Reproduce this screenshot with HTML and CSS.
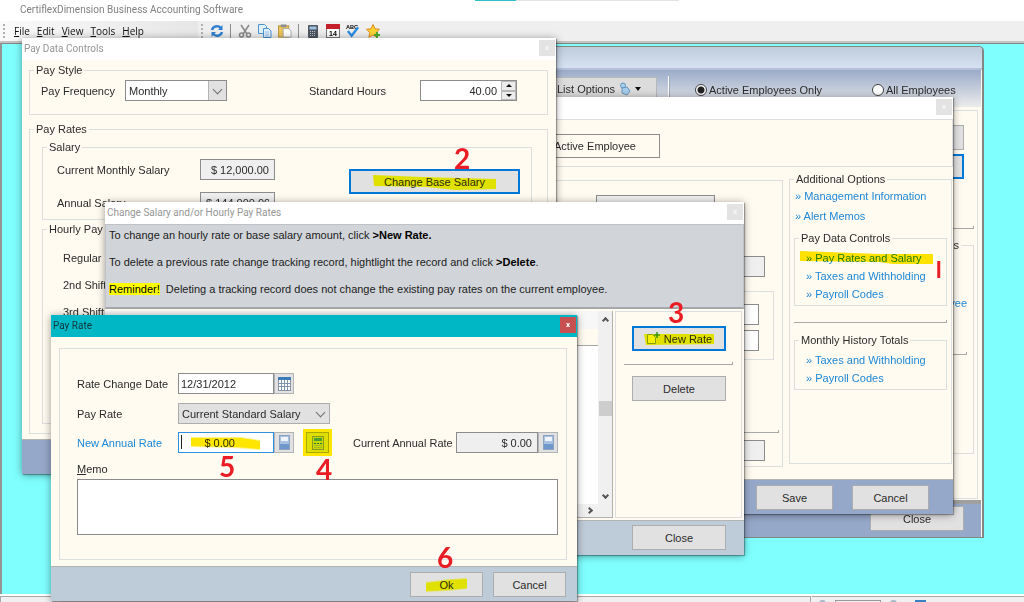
FILE: index.html
```html
<!DOCTYPE html>
<html lang="en">
<head>
  <meta charset="UTF-8">
  <title>CertiflexDimension Business Accounting Software</title>
  <link rel="stylesheet" href="styles.css">
</head>
<body>

<header class="app-title">
  <div class="app-strip"><span></span></div>
  CertiflexDimension Business Accounting Software
</header>

<div class="app-bar">
  <nav class="menu">
    <i class="grip"></i>
    <button><u>F</u>ile</button>
    <button><u>E</u>dit</button>
    <button><u>V</u>iew</button>
    <button><u>T</u>ools</button>
    <button><u>H</u>elp</button>
  </nav>
  <div class="tools">
    <i class="grip"></i>
    <button class="tool" aria-label="Refresh">
      <svg width="14" height="14" viewBox="0 0 14 14" fill="none" stroke="#2f7fd0" stroke-width="2.4"><path d="M2 6c1-4 6-5 9-2"/><path d="M12 8c-1 4-6 5-9 2"/><path d="M12.500 1v5H8zM1.500 13V8H6z" fill="#2f7fd0" stroke="none"/></svg>
    </button>
    <i class="bar"></i>
    <button class="tool cut" aria-label="Cut">
      <svg width="14" height="14" viewBox="0 0 14 14" fill="none" stroke="#8b8b8b" stroke-width="1.600"><path d="M3 1l6 9M11 1L5 10"/><circle cx="3.500" cy="11" r="2"/><circle cx="10.500" cy="11" r="2"/></svg>
    </button>
    <button class="tool" aria-label="Copy">
      <svg width="14" height="14" viewBox="0 0 14 14" fill="#e2f0fc" stroke="#4a94d4"><path d="M.500.500h6l2 2v7h-8z"/><path d="M5.500 4.500h5l2.500 2.500v6.500H5.500z"/><path d="M7 8h4M7 10h4M7 12h4" stroke="#9cc6ea"/></svg>
    </button>
    <button class="tool" aria-label="Paste">
      <svg width="15" height="14" viewBox="0 0 15 14"><rect x=".500" y="1.500" width="11" height="12" fill="#ecc65a" stroke="#b8903a"/><rect x="3" y="0" width="6" height="3" fill="#8d8d8d"/><path d="M5.500 4.500h6l2.500 2.500v6.500H5.500z" fill="#fff" stroke="#a9a9a9"/></svg>
    </button>
    <i class="bar"></i>
    <button class="tool" aria-label="Calculator">
      <svg width="10" height="13" viewBox="0 0 10 13"><rect width="10" height="13" rx="1" fill="#4c5561"/><rect x="1.500" y="1.500" width="7" height="3" fill="#9fc0dc"/><path d="M2 6.500h6M2 8.500h6M2 10.500h6" stroke="#b9c4ce" stroke-dasharray="1 1"/></svg>
    </button>
    <button class="tool" aria-label="Calendar">
      <svg width="14" height="14" viewBox="0 0 14 14"><rect x=".500" y=".500" width="13" height="13" fill="#fff" stroke="#777"/><rect width="14" height="5" fill="#c3202b"/><text x="7" y="12" text-anchor="middle" class="ico-day">14</text></svg>
    </button>
    <button class="tool" aria-label="Spelling">
      <svg width="15" height="14" viewBox="0 0 15 14"><text x="0" y="5" class="ico-abc">ABC</text><path d="M2 7l4 5L13 3" fill="none" stroke="#2f8fe0" stroke-width="2.600"/></svg>
    </button>
    <button class="tool" aria-label="Favorites">
      <svg width="14" height="14" viewBox="0 0 14 14"><path d="M7 .500l2 4.300 4.500.500-3.300 3.200.900 4.800L7 11l-4.100 2.300.900-4.800L.500 5.300 5 4.800z" fill="#ffd536" stroke="#e08a1c"/><path d="M11 8v6M8 11h6" stroke="#4fae2c" stroke-width="2"/></svg>
    </button>
  </div>
</div>

<main class="workspace"></main>

<footer class="status">
  <div class="status-main"></div>
  <div class="status-nav"><i class="dot"></i><i class="page"></i><i class="dot"></i><i class="view"></i></div>
</footer>

<!-- Employee list -->
<section class="window win-list">
  <div class="list-title"></div>
  <div class="list-bar">
    <button class="list-options">List Options
      <svg width="12" height="14" viewBox="0 0 12 14" fill="#a5cdec" stroke="#6b94b8"><circle cx="4" cy="3.500" r="2.500"/><path d="M3 6l5-1 3 4-3 4-5-2z"/></svg>
      <i class="tri"></i>
    </button>
    <i class="list-sep"></i>
    <label class="radio radio-active"><input type="radio" name="emp" checked>Active Employees Only</label>
    <label class="radio"><input type="radio" name="emp">All Employees</label>
  </div>
  <div class="list-body">
    <div class="list-panel">
      <button class="btn list-btn" aria-label="Add employee"></button>
      <button class="btn list-btn focus" aria-label="Edit employee"></button>
      <i class="rule"></i>
      <fieldset class="list-group">
        <legend>Options</legend>
        <a href="#">Print Employee</a>
        <i class="rule"></i>
      </fieldset>
    </div>
  </div>
  <div class="list-foot"><button class="btn">Close</button></div>
</section>

<!-- Employee record -->
<section class="window win-employee">
  <div class="titlebar"><button class="close" aria-label="Close">x</button></div>
  <div class="emp-head"><input type="text" value="Active Employee" aria-label="Status" readonly></div>
  <div class="emp-body">
    <div class="box emp-detail">
      <div class="emp-name"><label for="location">Location</label><input id="location" type="text" readonly></div>
      <input class="wide" type="text" aria-label="Department" readonly>
      <div class="box emp-sub">
        <input type="text" aria-label="Hire date">
        <input type="text" aria-label="Review date">
      </div>
      <i class="rule"></i>
      <input class="wide" type="text" aria-label="Class" readonly>
    </div>
    <fieldset class="options">
      <legend>Additional Options</legend>
      <a href="#">» Management Information</a>
      <a href="#">» Alert Memos</a>
      <fieldset class="links">
        <legend>Pay Data Controls</legend>
        <a href="#" class="marked">» Pay Rates and Salary
          <svg class="mark" width="134" height="14" viewBox="0 0 134 14"><path d="M0 0l80 3 53 0v10l-40 0-14-2-79-1z" fill="#ffe600"/></svg>
          <span class="num num-1">I</span>
        </a>
        <a href="#">» Taxes and Withholding</a>
        <a href="#">» Payroll Codes</a>
      </fieldset>
      <i class="rule"></i>
      <fieldset class="links history">
        <legend>Monthly History Totals</legend>
        <a href="#">» Taxes and Withholding</a>
        <a href="#">» Payroll Codes</a>
      </fieldset>
    </fieldset>
  </div>
  <div class="foot dark"><button class="btn">Save</button><button class="btn">Cancel</button></div>
</section>

<!-- Pay data controls -->
<section class="window win-controls">
  <div class="titlebar">Pay Data Controls<button class="close" aria-label="Close">x</button></div>
  <div class="controls-body">
    <fieldset class="pay-style">
      <legend>Pay Style</legend>
      <div class="row">
        <label for="freq">Pay Frequency</label>
        <span class="select select-box"><select id="freq"><option>Monthly</option></select></span>
        <label for="hours" class="hours">Standard Hours</label>
        <span class="spinner">
          <input id="hours" type="text" value="40.00">
          <span class="spin"><button aria-label="Up"><i class="up"></i></button><button aria-label="Down"><i class="down"></i></button></span>
        </span>
      </div>
    </fieldset>
    <fieldset class="pay-rates">
      <legend>Pay Rates</legend>
      <fieldset class="salary">
        <legend>Salary</legend>
        <div class="amounts">
          <label for="monthly">Current Monthly Salary</label>
          <input id="monthly" type="text" value="$ 12,000.00" readonly>
          <label for="annual">Annual Salary</label>
          <input id="annual" type="text" value="$ 144,000.00" readonly>
        </div>
        <button class="btn focus change-base">Change Base Salary
          <svg class="mark" width="126" height="16" viewBox="0 0 126 16"><path d="M1 1l50 2 73 2v10l-40 1-30-3-52-1z" fill="#ffff00"/></svg>
          <span class="num num-2">2</span>
        </button>
      </fieldset>
      <fieldset class="hourly">
        <legend>Hourly Pay</legend>
        <div>Regular</div>
        <div>2nd Shift</div>
        <div>3rd Shift</div>
      </fieldset>
    </fieldset>
  </div>
  <div class="foot dark"></div>
</section>

<!-- Change salary -->
<section class="window win-change">
  <div class="titlebar">Change Salary and/or Hourly Pay Rates<button class="close" aria-label="Close">x</button></div>
  <div class="info">
    <p>To change an hourly rate or base salary amount, click <b>&gt;New Rate.</b></p>
    <p>To delete a previous rate change tracking record, hightlight the record and click <b>&gt;Delete</b>.</p>
    <p><mark>Reminder!</mark>&nbsp; Deleting a tracking record does not change the existing pay rates on the current employee.</p>
  </div>
  <div class="change-body">
    <div class="grid">
      <div class="grid-rows"><div class="grid-head"></div><div class="grid-row"></div></div>
      <div class="vscroll"><i class="chev up"></i><i class="thumb"></i><i class="chev down"></i></div>
      <div class="hscroll"><i class="chev right"></i></div>
    </div>
    <div class="box side">
      <button class="btn focus new-rate">
        <svg width="14" height="13" viewBox="0 0 14 13"><path d="M1.500 2.500h5l3 3v6h-8z" fill="#f4f0a0" stroke="#8aa04a"/><path d="M11 0v6M8 3h6" stroke="#3f9a2a" stroke-width="1.600"/></svg>
        New Rate
        <svg class="mark" width="70" height="12" viewBox="0 0 70 12"><path d="M0 1l70 0v10l-68 1z" fill="#ffff00"/></svg>
        <span class="num num-3">3</span>
      </button>
      <i class="rule"></i>
      <button class="btn">Delete</button>
    </div>
  </div>
  <div class="foot light"><button class="btn">Close</button></div>
</section>

<!-- Pay rate -->
<section class="window win-rate">
  <div class="titlebar teal">Pay Rate<button class="close red" aria-label="Close">x</button></div>
  <form class="box rate-form">
    <div class="row">
      <label for="date">Rate Change Date</label>
      <input id="date" type="text" value="12/31/2012">
      <button type="button" class="ico-btn" aria-label="Pick date">
        <svg width="13" height="14" viewBox="0 0 13 14"><rect x=".500" y=".500" width="12" height="13" fill="#fff" stroke="#8794a8"/><rect width="13" height="3" fill="#3b7cb8"/><path d="M1 6.500h11M1 9.500h11M3.500 3v10M6.500 3v10M9.500 3v10" stroke="#7f93ad"/></svg>
      </button>
    </div>
    <div class="row">
      <label for="rate">Pay Rate</label>
      <span class="select select-flat"><select id="rate"><option>Current Standard Salary</option></select></span>
    </div>
    <div class="row">
      <label for="newrate" class="blue">New Annual Rate</label>
      <span class="new-input">
        <i class="caret"></i>
        <input id="newrate" type="text" value="$ 0.00">
        <svg class="mark" width="70" height="13" viewBox="0 0 70 13"><path d="M0 1h50l19 3v9l-24-2-45-1z" fill="#ffe600"/></svg>
        <span class="num num-5">5</span>
      </span>
      <button type="button" class="ico-btn" aria-label="Calculator">
        <svg width="11" height="15" viewBox="0 0 11 15"><rect x=".500" y=".500" width="10" height="14" fill="#a9c2e2" stroke="#8ea2bf"/><rect x="2" y="2" width="7" height="4" fill="#eef4fa"/><rect x="1" y="9" width="9" height="5" fill="#6f97cc"/></svg>
      </button>
      <button type="button" class="ico-btn annual" aria-label="Annualize">
        <svg width="12" height="14" viewBox="0 0 12 14"><rect x=".500" y=".500" width="11" height="13" fill="#c8d800" stroke="#8a9a20"/><rect x="2" y="2" width="8" height="3" fill="#4aa030"/><path d="M2 7.500h8" stroke="#2f7a1c" stroke-dasharray="2 1"/><path d="M2 9.500h8M2 11.500h8" stroke="#a9b920"/></svg>
        <span class="num num-4">4</span>
      </button>
      <label for="currate" class="current">Current Annual Rate</label>
      <input id="currate" class="cur-input" type="text" value="$ 0.00" readonly>
      <button type="button" class="ico-btn" aria-label="Calculator">
        <svg width="11" height="15" viewBox="0 0 11 15"><rect x=".500" y=".500" width="10" height="14" fill="#a9c2e2" stroke="#8ea2bf"/><rect x="2" y="2" width="7" height="4" fill="#eef4fa"/><rect x="1" y="9" width="9" height="5" fill="#6f97cc"/></svg>
      </button>
    </div>
    <label for="memo" class="memo"><u>M</u>emo</label>
    <textarea id="memo"></textarea>
  </form>
  <div class="foot light">
    <button class="btn">Ok
      <svg class="mark" width="42" height="13" viewBox="0 0 42 13"><path d="M0 4l24-3 17-1v10l-20 2-21 1z" fill="#ffff00"/></svg>
      <span class="num num-6">6</span>
    </button>
    <button class="btn">Cancel</button>
  </div>
</section>

</body>
</html>
```
FILE: styles.css
```css
* {
  box-sizing: border-box;
}
body {
  margin: 0;
  height: 100vh;
  position: relative;
  overflow: hidden;
  display: flex;
  flex-direction: column;
  font: 11px/14px "Liberation Sans", Arial, sans-serif;
  color: #2b2b2b;
}
button, input, select, textarea {
  font: inherit;
  color: inherit;
  margin: 0;
}
a {
  display: block;
  color: #1f87d6;
  text-decoration: none;
  white-space: nowrap;
}
fieldset, .box {
  margin: 0;
  padding: 0;
  min-width: 0;
  border: 1px solid #dcdee0;
}
legend {
  padding: 0 2px;
  margin-left: 4px;
}
label {
  white-space: nowrap;
}
i {
  display: block;
  flex: none;
}

/* application frame */
.app-title {
  height: 21px;
  padding-left: 20px;
  position: relative;
  font: 10px/20px Roboto, sans-serif;
  color: #808080;
  background: #fff;
}
.app-strip {
  position: absolute;
  top: 0;
  left: 475px;
  width: 204px;
  height: 1px;
  background: #e4e4e4;
}
.app-strip span {
  display: block;
  width: 41px;
  height: 1px;
  background: #2fc0ca;
}
.app-bar {
  display: flex;
  height: 22px;
  flex: none;
  background: #efefef;
  border-bottom: 2px solid #c4c4c4;
}
.menu, .tools {
  display: flex;
  align-items: center;
}
.menu {
  width: 198px;
  padding-left: 3px;
  background: linear-gradient(90deg, #fafafa, #e6e6e6);
}
.menu button {
  margin-right: 7px;
  padding: 0;
  border: 0;
  background: none;
  font: 10px/18px "Open Sans", "Noto Sans", sans-serif;
  color: #111;
}
.tools {
  padding-left: 3px;
}
.grip {
  width: 2px;
  height: 15px;
  margin-right: 9px;
  background: repeating-linear-gradient(#b0b0b0 0 2px, transparent 2px 4px);
}
.tools .grip {
  margin-right: 7px;
}
.bar {
  width: 1px;
  height: 14px;
  margin: 0 7px 0 5px;
  background: #8f8f8f;
}
.tool {
  display: flex;
  justify-content: center;
  width: 14px;
  padding: 0;
  margin-right: 6px;
  border: 0;
  background: none;
}
.tool + .bar {
  margin-left: 0;
}
.ico-day {
  font: bold 7px "Liberation Sans", sans-serif;
}
.ico-abc {
  font: bold 6px "Liberation Sans", sans-serif;
}
.workspace {
  flex: 1;
  background: #80ffff;
  border-top: 1px solid #848484;
  border-left: 2px solid #949494;
}
.status {
  display: flex;
  height: 8px;
  flex: none;
  background: #f0f0f0;
  border-top: 2px solid #fff;
}
.status-main {
  width: 811px;
  border: 1px solid #a8a8a8;
  border-bottom: 0;
}
.status-nav {
  flex: 1;
  display: flex;
  gap: 9px;
  margin-left: 1px;
  padding: 3px 0 0 7px;
  border-top: 1px solid #a8a8a8;
}
.dot {
  width: 7px;
  height: 7px;
  border-radius: 4px;
  background: #a9b4c4;
}
.page {
  width: 46px;
  border: 1px solid #999;
  border-bottom: 0;
}
.view {
  width: 11px;
  height: 3px;
  margin-left: 9px;
  background: #3a80c4;
}

/* windows */
.window {
  position: absolute;
  display: flex;
  flex-direction: column;
  background: #fffbf0;
  box-shadow: 0 1px 8px rgba(0,0,0,0.4), 1px 1px 1px rgba(0,0,0,0.3);
}
.titlebar {
  display: flex;
  justify-content: space-between;
  height: 22px;
  flex: none;
  padding: 2px 1px 0 2px;
  background: #fff;
  color: #969696;
  font: 10px/17px Roboto, sans-serif;
}
.titlebar.teal {
  background: #00b7c6;
  color: #12363a;
}
.close {
  width: 16px;
  height: 16px;
  margin-left: auto;
  padding: 0;
  border: 0;
  background: #e3e3e3;
  color: #fff;
  font-size: 8px;
  line-height: 14px;
}
.close.red {
  background: #c75050;
  font-weight: bold;
}
.btn {
  position: relative;
  width: 94px;
  height: 25px;
  flex: none;
  padding: 0;
  border: 1px solid #adadad;
  background: #e1e1e1;
  white-space: nowrap;
}
.btn.focus {
  border: 2px solid #0078d7;
}
.foot {
  display: flex;
  justify-content: flex-end;
  height: 35px;
  flex: none;
  border-top: 1px solid #b4b4b4;
}
.dark {
  background: #96a8c9;
}
.light {
  background: #becbd9;
}
.rule {
  height: 3px;
  border-right: 1px solid #a8a8a8;
  border-bottom: 1px solid #a8a8a8;
}
input[type="text"] {
  height: 21px;
  padding: 0 5px;
  border: 1px solid #8c8c8c;
  border-radius: 0;
  background: #fff;
  outline: 0;
}
input[readonly] {
  background: #efefef;
}
.row {
  display: flex;
  align-items: center;
}

/* employee list */
.win-list {
  top: 46px;
  left: 300px;
  width: 684px;
  height: 492px;
  border: 1px solid #858585;
  border-right-width: 2px;
  border-radius: 5px 5px 0 0;
  background: #fffbf0;
  box-shadow: none;
  padding-right: 1px;
  overflow: hidden;
}
.list-title {
  height: 23px;
  margin-right: -1px;
  background: linear-gradient(#bfccdb, #d6e2f2);
  border-bottom: 2px solid #b4c0da;
}
.list-bar {
  display: flex;
  height: 37px;
  padding-left: 232px;
  background: linear-gradient(#9aabc9, #ececec);
}
.list-options {
  display: flex;
  align-items: center;
  gap: 4px;
  width: 124px;
  height: 24px;
  margin-top: 7px;
  padding: 0 0 0 23px;
  border: 1px solid #b8b8b8;
  background: #dcdcdc;
  white-space: nowrap;
}
.tri {
  border: 3px solid transparent;
  border-top: 4px solid #111;
  border-bottom: 0;
}
.list-sep {
  width: 2px;
  height: 24px;
  margin: 6px 25px 0 11px;
  background: #fff;
  border-right: 1px solid #a0a8b4;
}
.radio {
  display: flex;
  align-items: center;
  height: 40px;
}
.radio-active {
  width: 177px;
}
.radio input {
  appearance: none;
  width: 12px;
  height: 12px;
  margin: 0 2px 0 0;
  border: 1px solid #444;
  border-radius: 6px;
  background: #fff;
}
.radio input:checked {
  background: radial-gradient(circle, #222 0 3px, #fff 4px);
}
.list-body {
  flex: 1;
  padding: 3px 3px 0 0;
}
.list-panel {
  display: flex;
  flex-direction: column;
  align-items: flex-end;
  gap: 4px;
  height: 389px;
  padding: 14px 3px 0 0;
  border: 1px solid #dcdee0;
}
.list-btn {
  margin-right: 10px;
}
.list-panel > .rule {
  width: 120px;
  margin-top: 43px;
}
.list-group {
  display: flex;
  flex-direction: column;
  align-items: flex-end;
  width: 124px;
  height: 216px;
  margin-top: 5px;
  padding-right: 6px;
}
.list-group legend {
  margin-left: auto;
  margin-right: 6px;
}
.list-group a {
  margin-top: 44px;
}
.list-group .rule {
  width: 110px;
  margin-top: 42px;
}
.list-foot {
  display: flex;
  justify-content: flex-end;
  height: 37px;
  padding: 2px 17px 0 0;
  background: #96a8c9;
  border-top: 4px solid #a0a0a0;
}

/* employee record */
.win-employee {
  top: 97px;
  left: 300px;
  width: 653px;
  height: 417px;
}
.emp-head {
  height: 48px;
  padding: 14px 0 0 229px;
  border: 1px solid #dcdee0;
}
.emp-head input {
  width: 130px;
  height: 24px;
  background: #fffbf0;
  text-align: center;
}
.emp-body {
  flex: 1;
  display: flex;
  align-items: flex-start;
  padding: 5px 1px 0 0;
}
.emp-detail {
  flex: 1;
  display: flex;
  flex-direction: column;
  align-items: flex-end;
  height: 287px;
  margin: 8px 6px 0 8px;
}
.emp-name {
  display: flex;
  gap: 18px;
  margin: 14px 67px 0 0;
}
.emp-name label {
  padding-top: 4px;
}
.emp-name input {
  width: 119px;
}
.wide {
  width: 119px;
  margin-right: 17px;
}
.emp-name + .wide {
  margin-top: 40px;
}
.emp-sub {
  display: flex;
  flex-direction: column;
  align-items: flex-end;
  gap: 5px;
  width: 210px;
  height: 69px;
  margin: 14px 8px 0 0;
  padding: 12px 14px 0 0;
}
.emp-detail > .rule {
  width: 220px;
  margin: 70px 3px 7px 0;
}
.options {
  width: 163px;
  height: 292px;
  padding: 0 4px;
}
.options > legend {
  margin-left: 0;
}
.options > a {
  margin: 3px 0 6px 1px;
}
.links {
  display: flex;
  flex-direction: column;
  gap: 4px;
  height: 75px;
  margin-top: 8px;
  padding-left: 11px;
}
.links legend {
  margin-left: -7px;
}
.links a {
  margin-top: 0;
}
.links a:first-of-type {
  margin-top: 6px;
}
.options > .rule {
  margin: 14px 0 10px;
}
.history {
  height: 57px;
}
.win-employee .foot {
  padding: 5px 24px 0 0;
  gap: 19px;
}
.win-employee .foot .btn {
  width: 77px;
}

/* pay data controls */
.win-controls {
  top: 38px;
  left: 22px;
  width: 534px;
  height: 436px;
}
.controls-body {
  flex: 1;
  padding: 3px 8px 0 7px;
}
.pay-style {
  height: 52px;
  padding: 3px 0 0 11px;
}
.pay-style legend {
  margin-left: -7px;
}
.pay-style label {
  width: 84px;
}
.pay-style .hours {
  width: 111px;
  margin-left: 82px;
}
.select {
  position: relative;
  display: block;
}
.select select {
  appearance: none;
  width: 100%;
  height: 21px;
  padding: 0 3px;
  border: 1px solid #8c8c8c;
  border-radius: 0;
  background: #fff;
}
.select::after {
  content: "";
  position: absolute;
  right: 6px;
  top: 6px;
  width: 6px;
  height: 6px;
  border: solid #707070;
  border-width: 0 1px 1px 0;
  transform: rotate(45deg);
}
.select-box {
  width: 102px;
}
.select-box select {
  background: linear-gradient(90deg, #fff 82px, #b4b4b4 82px, #b4b4b4 83px, #e1e1e1 83px);
}
.select-flat {
  width: 152px;
}
.select-flat select {
  background: #e1e1e1;
  border-color: #adadad;
}
.spinner {
  display: flex;
  width: 97px;
  border: 1px solid #8c8c8c;
  background: #fff;
}
.spinner input[type="text"] {
  width: 80px;
  height: 19px;
  padding: 0 4px;
  border: 0;
  text-align: right;
}
.spin {
  display: flex;
  flex-direction: column;
  flex: 1;
}
.spin button {
  display: flex;
  flex: 1;
  align-items: center;
  justify-content: center;
  padding: 0;
  border: 1px solid #b8b8b8;
  background: #ececec;
}
.spin i {
  border: 3px solid transparent;
}
.spin .up {
  border-top: 0;
  border-bottom-color: #111;
}
.spin .down {
  border-bottom: 0;
  border-top-color: #111;
}
.pay-rates {
  height: 312px;
  margin-top: 7px;
  padding: 4px 15px 0 12px;
}
.pay-rates > legend {
  margin-left: -8px;
}
.salary {
  display: flex;
  align-items: flex-start;
  height: 80px;
  padding: 5px 0 0 14px;
}
.salary legend, .hourly legend {
  margin-left: -10px;
}
.amounts {
  display: grid;
  grid-template-columns: 143px 75px;
  row-gap: 12px;
  align-items: center;
}
.amounts input {
  text-align: right;
}
.change-base {
  width: 171px;
  margin: 10px 0 0 74px;
}
.hourly {
  height: 202px;
  margin-top: 2px;
  padding: 15px 0 0 20px;
}
.hourly legend {
  margin-left: -16px;
}
.hourly div {
  margin-bottom: 13px;
}

/* change salary */
.win-change {
  top: 202px;
  left: 105px;
  width: 639px;
  height: 353px;
}
.info {
  height: 85px;
  padding: 3px 3px 0;
  background: #d1d5d9;
  border: 1px solid #bfc2c6;
  border-bottom: 2px solid #a4a7ab;
  color: #1c1c1c;
}
.info p {
  margin: 0 0 13px;
}
.info b {
  color: #000;
}
mark {
  background: #ffff00;
}
.change-body {
  flex: 1;
  display: flex;
  padding: 2px 2px 2px 0;
}
.grid {
  width: 508px;
  display: grid;
  grid-template: 1fr 13px / 1fr 14px;
  border: solid #b0b0b0;
  border-width: 0 1px 1px 0;
  background: #f0f0f0;
}
.grid-rows {
  background: #fff;
}
.grid-head {
  height: 18px;
  background: #f7f7f7;
}
.grid-row {
  height: 17px;
  background: #fffbf0;
  border-bottom: 1px solid #a8a8a8;
}
.vscroll {
  display: flex;
  flex-direction: column;
  align-items: center;
  justify-content: space-between;
  padding: 7px 0 6px;
}
.thumb {
  width: 13px;
  height: 15px;
  background: #cdcdcd;
}
.hscroll {
  display: flex;
  align-items: center;
  justify-content: flex-end;
  padding-right: 6px;
}
.chev {
  width: 5px;
  height: 5px;
  border: solid #555;
  border-width: 2px 2px 0 0;
  transform: rotate(45deg);
}
.chev.up {
  transform: rotate(-45deg);
}
.chev.down {
  transform: rotate(135deg);
}
.side {
  flex: 1;
  display: flex;
  flex-direction: column;
  margin-left: 2px;
  padding: 14px 16px 0;
}
.side .rule {
  margin: 11px -8px;
}
.new-rate {
  display: flex;
  align-items: center;
  justify-content: center;
  gap: 4px;
}
.win-change .foot {
  padding: 4px 18px 0 0;
}

/* pay rate */
.win-rate {
  top: 315px;
  left: 51px;
  width: 526px;
  height: 286px;
}
.rate-form {
  flex: 1;
  display: flex;
  flex-direction: column;
  margin: 11px 10px 6px 8px;
  padding: 24px 8px 0 17px;
}
.rate-form .row {
  margin-bottom: 9px;
}
.rate-form .row:nth-child(2) {
  margin-bottom: 8px;
}
.rate-form .row > label:first-child {
  width: 101px;
}
.blue {
  color: #1f87d6;
}
#date {
  width: 96px;
  padding: 0 2px;
}
.new-input {
  position: relative;
  display: flex;
  width: 96px;
}
.new-input input[type="text"] {
  width: 96px;
  padding: 0 38px 0 20px;
  border-color: #2f8fe0;
  text-align: right;
}
.caret {
  position: absolute;
  left: 3px;
  top: 3px;
  width: 1px;
  height: 14px;
  background: #222;
}
.ico-btn {
  position: relative;
  display: flex;
  align-items: center;
  justify-content: center;
  width: 20px;
  height: 21px;
  flex: none;
  padding: 0;
  border: 1px solid #b4b4b4;
  background: #e1e1e1;
}
.annual {
  width: 23px;
  margin-left: 12px;
  border-color: #a8a800;
  background: #dede00;
  box-shadow: 0 0 0 3px #ffe600;
}
.current {
  margin-left: 24px;
}
.cur-input {
  width: 82px;
  margin-left: auto;
  text-align: right;
}
.memo {
  margin-bottom: 3px;
}
textarea {
  height: 56px;
  border: 1px solid #8c8c8c;
  border-radius: 0;
  resize: none;
}
.win-rate .foot {
  gap: 10px;
  padding: 5px 11px 0 0;
}
.win-rate .foot .btn {
  width: 73px;
}

/* pen and highlighter notes */
.marked {
  position: relative;
}
.mark {
  position: absolute;
  top: 50%;
  left: 50%;
  transform: translate(-50%, -50%);
  mix-blend-mode: multiply;
  pointer-events: none;
}
.marked .mark {
  left: 61px;
}
.num {
  position: absolute;
  color: #ea1c24;
  font: bold 28px/28px Lato, sans-serif;
  pointer-events: none;
}
.num-1 {
  right: 4px;
  top: 5px;
  font-size: 22px;
}
.num-2 {
  left: 103px;
  top: -27px;
}
.num-3 {
  left: 34px;
  top: -30px;
}
.num-4 {
  left: 9px;
  top: 22px;
}
.num-5 {
  left: 41px;
  top: 20px;
}
.num-6 {
  left: 26px;
  top: -30px;
}
```
